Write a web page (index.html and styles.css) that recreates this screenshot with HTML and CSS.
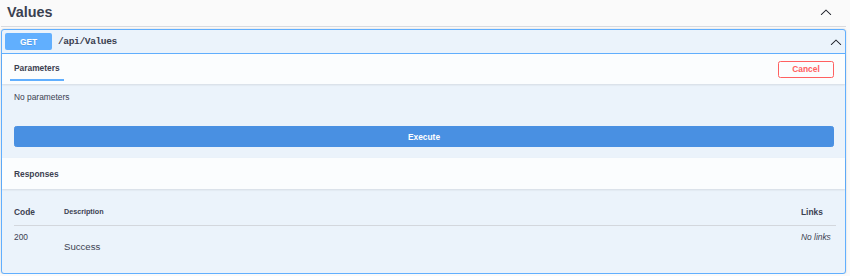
FILE: index.html
```html
<!DOCTYPE html>
<html lang="en">
<head>
    <meta charset="UTF-8">
    <title>Swagger UI - Values</title>
    <link rel="stylesheet" href="styles.css">
</head>
<body>
    <div class="page">
        <h3 class="tag">
            <span class="tag-name">Values</span>
            <svg class="arrow" viewBox="0 0 20 20"><path d="M17.418 14.908c.271.268.709.268.979 0s.271-.701 0-.969l-7.908-7.83c-.27-.268-.707-.268-.979 0l-7.908 7.83c-.27.268-.27.701 0 .969.271.268.709.268.979 0L10 7.723z"/></svg>
        </h3>

        <div class="opblock">
            <div class="summary">
                <span class="method">GET</span>
                <span class="path">/api/Values</span>
                <svg class="arrow" viewBox="0 0 20 20"><path d="M17.418 14.908c.271.268.709.268.979 0s.271-.701 0-.969l-7.908-7.83c-.27-.268-.707-.268-.979 0l-7.908 7.83c-.27.268-.27.701 0 .969.271.268.709.268.979 0L10 7.723z"/></svg>
            </div>

            <div class="section-header tab-header">
                <h4 class="tab"><span>Parameters</span></h4>
                <button class="btn cancel">Cancel</button>
            </div>

            <div class="description">
                <p>No parameters</p>
            </div>

            <div class="execute-wrapper">
                <button class="btn execute">Execute</button>
            </div>

            <div class="section-header responses-header">
                <h4>Responses</h4>
            </div>

            <div class="responses-inner">
                <div class="row head">
                    <div class="col-status">Code</div>
                    <div class="col-desc">Description</div>
                    <div class="col-links">Links</div>
                </div>
                <div class="row">
                    <div class="col-status">200</div>
                    <div class="col-desc"><p>Success</p></div>
                    <div class="col-links"><i>No links</i></div>
                </div>
            </div>
        </div>
    </div>
</body>
</html>
```

FILE: styles.css
```css
body { margin: 0; background: #fafafa; font-family: "Liberation Sans", Arial, sans-serif; color: #3b4151; }
.page { padding: 0 4px 0 1px; }

.tag { display: flex; align-items: center; justify-content: space-between; height: 24px; margin: 0; padding: 0 14px 2px 6px; font-size: 14.4px; font-weight: bold; border-bottom: 1px solid #d8dadf; }
.arrow { width: 12px; height: 12px; fill: #1d2029; }

.opblock { margin-top: 2px; border: 1px solid #61affe; border-radius: 3px; background: #ebf3fb; box-shadow: 0 0 2px rgba(0,0,0,.19); }
.summary { display: flex; align-items: center; padding: 3px; border-bottom: 1px solid #61affe; }
.method { width: 47px; padding: 3.6px 0; border-radius: 2px; background: #61affe; color: #fff; font-size: 8.4px; line-height: 10px; font-weight: bold; text-align: center; text-shadow: 0 1px 0 rgba(0,0,0,.1); }
.path { flex: 1; padding: 0 6px; font-family: "Liberation Mono", "Courier New", monospace; font-size: 9.6px; font-weight: bold; letter-spacing: -0.4px; }

.section-header { display: flex; align-items: center; background: rgba(255,255,255,.8); box-shadow: 0 1px 2px rgba(0,0,0,.1); }
.section-header h4 { margin: 0; font-size: 8.4px; line-height: 10px; }

.tab-header { height: 30px; padding: 0 11px 0 8px; justify-content: space-between; }
.tab { align-self: flex-end; margin-bottom: 3px !important; }
.tab span { display: block; padding: 0 4px 6px; border-bottom: 2.4px solid #61affe; }

.btn { font-family: inherit; font-weight: bold; font-size: 8.4px; line-height: 10px; border-radius: 2.4px; background: transparent; cursor: pointer; }
.cancel { width: 56px; height: 17px; padding: 0; border: 1.2px solid #ff6060; color: #ff6060; }

.description { padding: 8px 12px 0; }
.description p { margin: 0; font-size: 8.4px; line-height: 10px; }

.execute-wrapper { padding: 24px 11px 11px 12px; }
.execute { display: block; width: 100%; height: 21px; padding: 0; border: 1.2px solid #4990e2; background: #4990e2; color: #fff; }

.responses-header { height: 31px; padding: 0 12px; }

.responses-inner { padding: 0 9px 21px 12px; }
.row { display: flex; }
.head { align-items: center; padding: 18px 0 8px; border-bottom: 1px solid #d3d7dd; font-weight: bold; }
.row:not(.head) { padding-top: 6px; }
.col-status { width: 50px; font-size: 8.4px; line-height: 10px; }
.col-desc { flex: 1; font-size: 7.2px; line-height: 10px; }
.col-desc p { margin: 9px 0 0; font-size: 9.6px; line-height: 11px; }
.col-links { width: 35px; font-size: 8.4px; line-height: 10px; }
.col-links i { font-size: 8.4px; }
```
